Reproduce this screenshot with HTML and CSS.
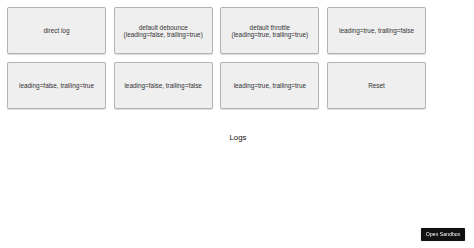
FILE: index.html
```html
<!DOCTYPE html>
<html>
<head>
<meta charset="utf-8">
<link rel="stylesheet" href="styles.css">
</head>
<body>
<div class="grid">
  <button class="btn">direct log</button>
  <button class="btn">default debounce<br>(leading=false, trailing=true)</button>
  <button class="btn">default throttle<br>(leading=true, trailing=true)</button>
  <button class="btn">leading=true, trailing=false</button>
  <button class="btn">leading=false, trailing=true</button>
  <button class="btn">leading=false, trailing=false</button>
  <button class="btn">leading=true, trailing=true</button>
  <button class="btn">Reset</button>
</div>
<div class="logs">Logs</div>
<a class="sandbox">Open Sandbox</a>
</body>
</html>
```
FILE: styles.css
```css
html, body {
  margin: 0;
  padding: 0;
  background: #fff;
  font-family: "Liberation Sans", Arial, sans-serif;
}
.grid {
  display: grid;
  grid-template-columns: repeat(4, 99px);
  grid-auto-rows: 47px;
  column-gap: 7.7px;
  row-gap: 8px;
  padding: 7px 0 0 7px;
}
.btn {
  margin: 0;
  padding: 0;
  background: #efefef;
  border: 1px solid #b4b4b4;
  border-radius: 2px;
  box-shadow: 0 0.5px 1px rgba(0,0,0,0.15);
  font-family: "Liberation Sans", Arial, sans-serif;
  font-size: 6.4px;
  line-height: 7px;
  color: #333;
  text-align: center;
}
.logs {
  margin-top: 24px;
  text-align: center;
  font-size: 7.8px;
  line-height: 10px;
  color: #111;
  padding-left: 2px;
}
.sandbox {
  position: fixed;
  right: 9px;
  bottom: 7px;
  width: 44px;
  height: 13px;
  background: #111;
  color: #fff;
  font-size: 5.2px;
  line-height: 13px;
  text-align: center;
  border-radius: 1px;
  box-shadow: 0 0 1px rgba(0,0,0,0.4);
}
```
